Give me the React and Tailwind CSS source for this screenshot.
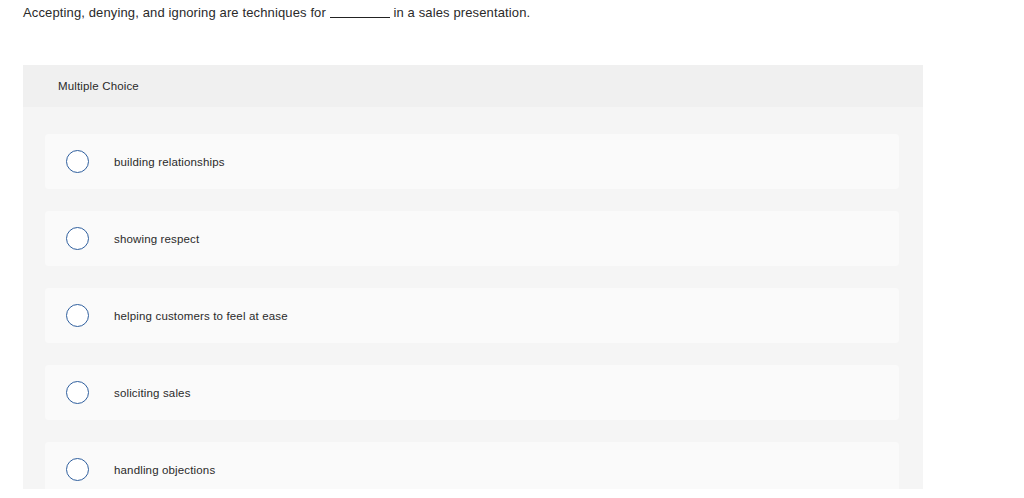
import React from "react";

const OPTIONS = [
  "building relationships",
  "showing respect",
  "helping customers to feel at ease",
  "soliciting sales",
  "handling objections",
];

function Option({ label }) {
  return (
    <div className="flex items-center h-[55px] shrink-0 bg-[#fafafa] rounded-sm pl-[21px]">
      <span className="w-[23px] h-[23px] rounded-full border border-[#2f5f9e] bg-white shrink-0" />
      <span className="ml-[25px] pt-[2px] text-[11.5px] tracking-[0.15px] text-[#2a2a2a]">{label}</span>
    </div>
  );
}

export default function App() {
  return (
    <div className="w-[1024px] h-[498px] bg-white overflow-hidden" style={{ fontFamily: "'Liberation Sans', Arial, sans-serif" }}>
      <p className="pl-[23px] pt-[5px] text-[13px] leading-[16px] tracking-[0.13px] text-[#2a2a2a]">
        Accepting, denying, and ignoring are techniques for{" "}
        <span className="inline-block w-[60px] border-b border-[#222] align-baseline mb-[-1px]" />{" "}
        in a sales presentation.
      </p>
      <div className="ml-[23px] mt-[44px] w-[900px] h-[424px] overflow-hidden bg-[#f5f5f5]">
        <div className="h-[42px] bg-[#f0f0f0] flex items-center pl-[35px] pt-[2px] text-[11.5px] tracking-[0.15px] text-[#2a2a2a]">
          Multiple Choice
        </div>
        <div className="flex flex-col gap-[22px] pl-[22px] pr-[24px] pt-[27px]">
          {OPTIONS.map((o) => (
            <Option key={o} label={o} />
          ))}
        </div>
      </div>
    </div>
  );
}
